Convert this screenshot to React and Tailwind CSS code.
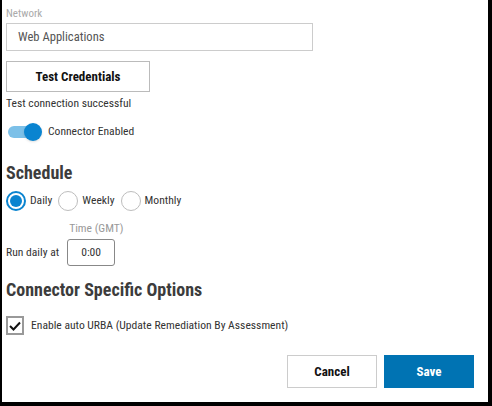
const Radio = ({ label, checked }) => (
  <label className="flex items-center gap-[4px]">
    <span
      className={
        checked
          ? "w-[20px] h-[20px] rounded-full border-2 border-[#0a84d0] flex items-center justify-center bg-white"
          : "w-[20px] h-[20px] rounded-full border border-[#bdbdbd] bg-white"
      }
    >
      {checked && <span className="w-[12px] h-[12px] rounded-full bg-[#0a84d0]" />}
    </span>
    <span className="text-[11.6px] text-[#333]">{label}</span>
  </label>
)

export default function App() {
  return (
    <div
      className="w-[492px] h-[406px] bg-white border-l-2 border-r-4 border-b-4 border-black overflow-hidden"
      style={{ fontFamily: "Roboto, 'Liberation Sans', sans-serif", fontStretch: "condensed" }}
    >
      <div className="pl-[4px] pr-[14px] pt-[7px]">
        <div className="text-[11px] leading-[14px] text-[#aaa]">Network</div>
        <div className="mt-[2px] w-[307px] h-[28px] border border-[#ccc] flex items-center pl-[11px] text-[12.6px] text-[#555]">
          Web Applications
        </div>

        <button className="mt-[10px] w-[144px] h-[31px] border border-[#bbb] bg-white text-[13px] font-bold text-[#111]">
          Test Credentials
        </button>
        <div className="mt-[3px] text-[11.6px] leading-[16px] text-[#333]">Test connection successful</div>

        {/* toggle */}
        <div className="mt-[12px] flex items-center h-[18px]">
          <div className="relative w-[34px] h-[18px] ml-[2px]">
            <div className="absolute left-0 top-[3px] w-[30px] h-[12px] rounded-full bg-[#7cc0e8]" />
            <div className="absolute right-0 top-0 w-[18px] h-[18px] rounded-full bg-[#0a84d0] shadow" />
          </div>
          <span className="ml-[6px] text-[11.6px] text-[#333]">Connector Enabled</span>
        </div>

        <h2 className="mt-[21px] text-[18px] leading-[22px] font-bold text-[#3c3c3c]">Schedule</h2>
        <div className="mt-[7px] flex items-center gap-[6px]">
          <Radio label="Daily" checked />
          <Radio label="Weekly" />
          <Radio label="Monthly" />
        </div>

        <div className="mt-[10px] flex">
          <div className="text-[11.6px] text-[#333] self-end pb-[5px]">Run daily at</div>
          <div className="ml-[8px] flex flex-col">
            <span className="ml-[2px] text-[11.6px] leading-[14px] text-[#999]">Time (GMT)</span>
            <div className="mt-[4px] w-[48px] h-[27px] rounded-[3px] border border-[#888] flex items-center justify-center text-[11.6px] text-[#333]">
              0:00
            </div>
          </div>
        </div>

        <h2 className="mt-[13px] text-[18px] leading-[22px] font-bold text-[#3c3c3c]">Connector Specific Options</h2>
        <div className="mt-[15px] flex items-center">
          <span className="w-[18px] h-[19px] border-2 border-[#999] flex items-center justify-center bg-white">
            <svg width="12" height="10" viewBox="0 0 12 10" fill="none">
              <path d="M1 5l3.5 3.5L11 1.5" stroke="#111" strokeWidth="2" />
            </svg>
          </span>
          <span className="ml-[7px] text-[11.6px] text-[#333]">Enable auto URBA (Update Remediation By Assessment)</span>
        </div>

        <div className="mt-[20px] flex justify-end gap-[7px]">
          <button className="w-[90px] h-[33px] border border-[#ccc] bg-white text-[13px] font-bold text-[#111]">Cancel</button>
          <button className="w-[90px] h-[33px] bg-[#0073b3] text-[13px] font-bold text-white">Save</button>
        </div>
      </div>
    </div>
  )
}
